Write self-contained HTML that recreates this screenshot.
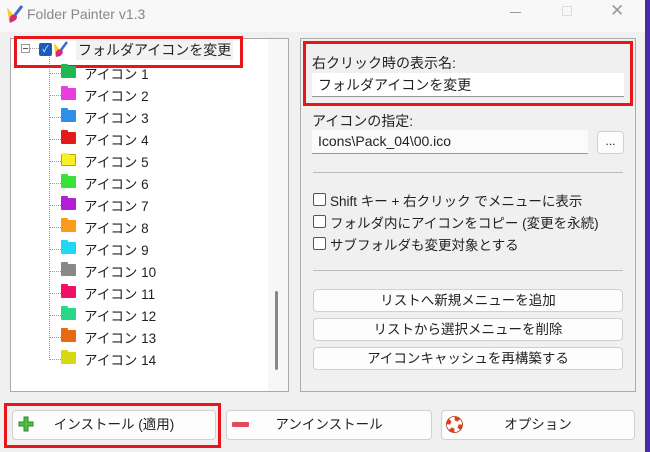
<!DOCTYPE html>
<html><head><meta charset="utf-8"><style>
*{margin:0;padding:0;box-sizing:border-box}
body{width:650px;height:452px;background:#f0f0f0;position:relative;overflow:hidden;font-family:"Liberation Sans","Noto Sans CJK JP",sans-serif;font-size:13px;color:#222}
.a{position:absolute}
.btn{position:absolute;background:#fdfdfd;border:1px solid #d0d0d0;border-radius:4px;text-align:center;font-size:13.5px;color:#222}
.red{position:absolute;border:3px solid #e8161b}
.fold{position:absolute;width:15px;height:12px;border-radius:1px;margin-top:-2px}
.fold:before{content:"";position:absolute;left:0;top:-2px;width:7px;height:3px;background:inherit;border-radius:1px 1px 0 0}
.it{position:absolute;left:84px;font-size:13.5px;margin-top:-2px}
.dot{position:absolute;border-top:1px dotted #999;width:12px;left:49px}
.cb{position:absolute;left:313px;width:13px;height:13px;border:1px solid #555;border-radius:2px;background:#fff}
.cl{position:absolute;left:330px;font-size:13.5px}
</style></head><body>
<div class="a" style="left:0;top:0;width:645px;height:32px;background:#f8f8f8"></div>
<div class="a" style="left:645px;top:0;width:5px;height:452px;background:#4b2aa8"></div>
<svg class="a" style="left:4px;top:3px" width="22" height="22" viewBox="0 0 22 22"><path d="M3 4 L9 12 L5 18 Z" fill="#f5d020"/><path d="M6 20 C4 14 8 10 12 12 C14 13 13 17 10 18 Z" fill="#d82a7a"/><path d="M11 12 L18 3" stroke="#3a6ad0" stroke-width="3"/></svg>
<div class="a" style="left:27px;top:6px;font-size:14px;color:#888">Folder Painter v1.3</div>
<div class="a" style="left:510px;top:12px;width:11px;height:1px;background:#999"></div>
<div class="a" style="left:562px;top:6px;width:10px;height:10px;border:1px solid #ddd"></div>
<div class="a" style="left:610px;top:1px;font-size:17px;color:#999">✕</div>

<div class="a" style="left:10px;top:38px;width:279px;height:354px;background:#fff;border:1px solid #aaa"></div>
<div class="a" style="left:268px;top:39px;width:20px;height:352px;background:#f7f7f7"></div>
<div class="a" style="left:275px;top:291px;width:3px;height:79px;background:#888;border-radius:2px"></div>
<div class="a" style="left:21px;top:44px;width:9px;height:9px;border:1px solid #999;background:#fff"></div>
<div class="a" style="left:23px;top:48px;width:5px;height:1px;background:#555"></div>
<div class="a" style="left:30px;top:48px;width:9px;border-top:1px dotted #999"></div>
<div class="a" style="left:39px;top:43px;width:13px;height:13px;background:#1b5cb8;border-radius:2px;color:#fff;font-size:9px;line-height:13px;text-align:center">✓</div>
<svg class="a" style="left:53px;top:40px" width="16" height="18" viewBox="0 0 16 18"><path d="M1 3 L7 10 L2 14 Z" fill="#f5d020"/><path d="M3 17 C1 11 6 8 9 10 C11 12 9 15 7 16 Z" fill="#d82a7a"/><path d="M8 10 L14 2" stroke="#3a6ad0" stroke-width="2.5"/></svg>
<div class="a" style="left:76px;top:40px;font-size:14px;background:#f2f2f2;padding:0 2px">フォルダアイコンを変更</div>
<div class="a" style="left:49px;top:57px;height:303px;border-left:1px dotted #999"></div>
<div class="red" style="left:14px;top:36px;width:229px;height:32px"></div>

<div class="dot" style="top:73px"></div><div class="fold" style="left:61px;top:68px;background:#1fb855"></div><div class="it" style="top:65px">アイコン 1</div>
<div class="dot" style="top:95px"></div><div class="fold" style="left:61px;top:90px;background:#e83ee0"></div><div class="it" style="top:87px">アイコン 2</div>
<div class="dot" style="top:117px"></div><div class="fold" style="left:61px;top:112px;background:#2e8fe8"></div><div class="it" style="top:109px">アイコン 3</div>
<div class="dot" style="top:139px"></div><div class="fold" style="left:61px;top:134px;background:#e41a1a"></div><div class="it" style="top:131px">アイコン 4</div>
<div class="dot" style="top:161px"></div><div class="fold" style="left:61px;top:156px;background:#f8f020;border:1px solid #b8a800"></div><div class="it" style="top:153px">アイコン 5</div>
<div class="dot" style="top:183px"></div><div class="fold" style="left:61px;top:178px;background:#3ae03a"></div><div class="it" style="top:175px">アイコン 6</div>
<div class="dot" style="top:205px"></div><div class="fold" style="left:61px;top:200px;background:#b01ed8"></div><div class="it" style="top:197px">アイコン 7</div>
<div class="dot" style="top:227px"></div><div class="fold" style="left:61px;top:222px;background:#fb9a1a"></div><div class="it" style="top:219px">アイコン 8</div>
<div class="dot" style="top:249px"></div><div class="fold" style="left:61px;top:244px;background:#20d8f0"></div><div class="it" style="top:241px">アイコン 9</div>
<div class="dot" style="top:271px"></div><div class="fold" style="left:61px;top:266px;background:#888"></div><div class="it" style="top:263px">アイコン 10</div>
<div class="dot" style="top:293px"></div><div class="fold" style="left:61px;top:288px;background:#f01068"></div><div class="it" style="top:285px">アイコン 11</div>
<div class="dot" style="top:315px"></div><div class="fold" style="left:61px;top:310px;background:#28d888"></div><div class="it" style="top:307px">アイコン 12</div>
<div class="dot" style="top:337px"></div><div class="fold" style="left:61px;top:332px;background:#e86a10"></div><div class="it" style="top:329px">アイコン 13</div>
<div class="dot" style="top:359px"></div><div class="fold" style="left:61px;top:354px;background:#d8d810"></div><div class="it" style="top:351px">アイコン 14</div>

<div class="a" style="left:300px;top:38px;width:336px;height:354px;border:1px solid #aaa"></div>
<div class="a" style="left:312px;top:53px;font-size:14px">右クリック時の表示名:</div>
<div class="a" style="left:312px;top:73px;width:312px;height:24px;background:#fff;border-bottom:1px solid #999"></div>
<div class="a" style="left:318px;top:75px;font-size:14px">フォルダアイコンを変更</div>
<div class="red" style="left:303px;top:41px;width:330px;height:65px"></div>
<div class="a" style="left:312px;top:111px;font-size:14px">アイコンの指定:</div>
<div class="a" style="left:312px;top:130px;width:276px;height:24px;background:#fbfbfb;border-bottom:1px solid #999"></div>
<div class="a" style="left:318px;top:133px;font-size:14px">Icons\Pack_04\00.ico</div>
<div class="btn" style="left:597px;top:131px;width:27px;height:23px;line-height:18px;font-size:12px">...</div>
<div class="a" style="left:313px;top:172px;width:310px;height:1px;background:#bbb"></div>
<div class="cb" style="top:193px"></div><div class="cl" style="top:190px">Shift キー + 右クリック でメニューに表示</div>
<div class="cb" style="top:215px"></div><div class="cl" style="top:212px">フォルダ内にアイコンをコピー (変更を永続)</div>
<div class="cb" style="top:237px"></div><div class="cl" style="top:234px">サブフォルダも変更対象とする</div>
<div class="a" style="left:313px;top:270px;width:310px;height:1px;background:#bbb"></div>
<div class="btn" style="left:313px;top:289px;width:310px;height:23px;line-height:21px">リストへ新規メニューを追加</div>
<div class="btn" style="left:313px;top:318px;width:310px;height:23px;line-height:21px">リストから選択メニューを削除</div>
<div class="btn" style="left:313px;top:347px;width:310px;height:23px;line-height:21px">アイコンキャッシュを再構築する</div>

<div class="btn" style="left:12px;top:410px;width:204px;height:30px;line-height:28px">インストール (適用)</div>
<svg class="a" style="left:18px;top:416px" width="16" height="16" viewBox="0 0 16 16"><path d="M6 1h4v5h5v4h-5v5H6v-5H1V6h5z" fill="#4cc040" stroke="#2a8a28"/></svg>
<div class="red" style="left:4px;top:403px;width:217px;height:45px"></div>
<div class="btn" style="left:226px;top:410px;width:206px;height:30px;line-height:28px">アンインストール</div>
<div class="a" style="left:232px;top:422px;width:17px;height:5px;background:#e04a5a;border-radius:1px"></div>
<div class="btn" style="left:441px;top:410px;width:194px;height:30px;line-height:28px">オプション</div>
<svg class="a" style="left:446px;top:416px" width="17" height="17" viewBox="0 0 17 17"><circle cx="8.5" cy="8.5" r="6" fill="none" stroke="#e04020" stroke-width="4" stroke-dasharray="4.7 4.7"/><circle cx="8.5" cy="8.5" r="6" fill="none" stroke="#fff" stroke-width="4" stroke-dasharray="4.7 4.7" stroke-dashoffset="4.7" opacity=".9"/><circle cx="8.5" cy="8.5" r="8" fill="none" stroke="#c03010" stroke-width=".8"/></svg>
</body></html>
